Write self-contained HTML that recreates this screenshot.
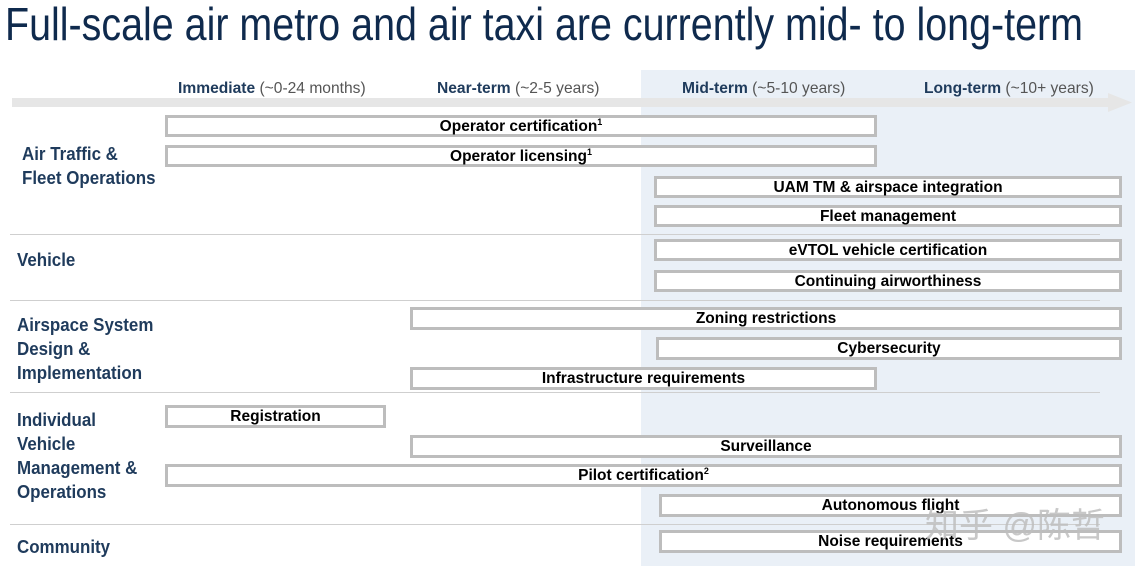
<!DOCTYPE html>
<html><head><meta charset="utf-8"><style>
body{margin:0;width:1135px;height:566px;background:#fff;position:relative;overflow:hidden;font-family:"Liberation Sans",Arial,sans-serif}
.shade{position:absolute;left:641px;top:70px;width:494px;height:496px;background:#eaf0f7}
.bar{position:absolute;box-sizing:border-box;border:3px solid #bdbdbd;background:#fff;font-weight:bold;font-size:15.5px;color:#000;text-align:center;line-height:17px}
.bar sup{font-size:9px;line-height:0;vertical-align:6px}
.sep{position:absolute;left:10px;width:1090px;height:1px;background:#cfcfcf}
.lbl{position:absolute;left:17px;font-weight:bold;font-size:18px;color:#1f3b5c;line-height:24px;transform:scaleX(0.94);transform-origin:left;white-space:nowrap}
.hd{position:absolute;top:80px;font-size:15.6px;color:#555}
.hd b{color:#1f3b5c}
</style></head><body>
<div class="shade"></div>
<svg style="position:absolute;left:0;top:0" width="1135" height="120">
<text x="5" y="40" font-family="Liberation Sans, Arial, sans-serif" font-size="46" fill="#0f2a4d" textLength="1078" lengthAdjust="spacingAndGlyphs">Full-scale air metro and air taxi are currently mid- to long-term</text>
<rect x="12" y="98" width="1098" height="9" fill="#e6e6e6"/>
<polygon points="1108,93 1132,102.5 1108,112" fill="#e6e6e6"/>
</svg>
<div class="hd" style="left:178px"><b>Immediate</b> (~0-24 months)</div>
<div class="hd" style="left:437px"><b>Near-term</b> (~2-5 years)</div>
<div class="hd" style="left:682px"><b>Mid-term</b> (~5-10 years)</div>
<div class="hd" style="left:924px"><b>Long-term</b> (~10+ years)</div>

<div class="lbl" style="top:142px;left:22px">Air Traffic &amp;<br>Fleet Operations</div>
<div class="lbl" style="top:248px">Vehicle</div>
<div class="lbl" style="top:313px">Airspace System<br>Design &amp;<br>Implementation</div>
<div class="lbl" style="top:408px">Individual<br>Vehicle<br>Management &amp;<br>Operations</div>
<div class="lbl" style="top:535px">Community</div>

<div class="sep" style="top:234px"></div>
<div class="sep" style="top:300px"></div>
<div class="sep" style="top:392px"></div>
<div class="sep" style="top:524px"></div>

<div class="bar" style="left:165px;top:115px;width:712px;height:22px">Operator certification<sup>1</sup></div>
<div class="bar" style="left:165px;top:145px;width:712px;height:22px">Operator licensing<sup>1</sup></div>
<div class="bar" style="left:654px;top:176px;width:468px;height:22px">UAM TM &amp; airspace integration</div>
<div class="bar" style="left:654px;top:205px;width:468px;height:22px">Fleet management</div>
<div class="bar" style="left:654px;top:239px;width:468px;height:22px">eVTOL vehicle certification</div>
<div class="bar" style="left:654px;top:270px;width:468px;height:22px">Continuing airworthiness</div>
<div class="bar" style="left:410px;top:307px;width:712px;height:23px">Zoning restrictions</div>
<div class="bar" style="left:656px;top:337px;width:466px;height:23px">Cybersecurity</div>
<div class="bar" style="left:410px;top:367px;width:467px;height:23px">Infrastructure requirements</div>
<div class="bar" style="left:165px;top:405px;width:221px;height:23px">Registration</div>
<div class="bar" style="left:410px;top:435px;width:712px;height:23px">Surveillance</div>
<div class="bar" style="left:165px;top:464px;width:957px;height:23px">Pilot certification<sup>2</sup></div>
<div class="bar" style="left:659px;top:494px;width:463px;height:23px">Autonomous flight</div>
<div class="bar" style="left:659px;top:530px;width:463px;height:23px">Noise requirements</div>
<div style="position:absolute;left:925px;top:498px;font-size:34px;color:rgba(190,190,190,0.85);font-family:'Liberation Sans','Noto Sans CJK SC',sans-serif">知乎 @陈哲</div>
</body></html>
